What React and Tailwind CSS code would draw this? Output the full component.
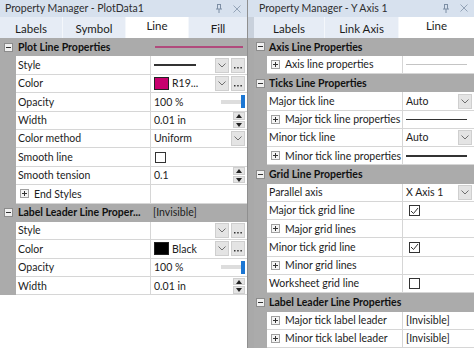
import React from 'react';

// 属性管理器面板：左侧 PlotData1，右侧 Y Axis 1
const Chevron = () => (
  <svg width="8" height="5" viewBox="0 0 8 5">
    <path d="M0.5 0.5L4 4L7.5 0.5" stroke="#6f6f6f" fill="none" strokeWidth="1" />
  </svg>
);

const DropBtn = () => (
  <div className="w-[14px] h-[15px] bg-[#e4e4e4] border border-[#cfcfcf] flex items-center justify-center">
    <Chevron />
  </div>
);

const DotsBtn = () => (
  <div className="w-[14px] h-[15px] bg-[#e4e4e4] border border-[#cfcfcf] flex items-end justify-center pb-[3px]">
    <svg width="8" height="2" viewBox="0 0 8 2">
      <rect x="0" y="0" width="1.5" height="1.5" fill="#333" />
      <rect x="3.2" y="0" width="1.5" height="1.5" fill="#333" />
      <rect x="6.4" y="0" width="1.5" height="1.5" fill="#333" />
    </svg>
  </div>
);

const Spin = () => (
  <div className="w-[12px] h-[16px] flex flex-col gap-[1px]">
    <div className="flex-1 bg-[#e4e4e4] border border-[#cfcfcf] flex items-center justify-center">
      <svg width="6" height="4" viewBox="0 0 6 4"><path d="M0 4L3 0L6 4Z" fill="#222" /></svg>
    </div>
    <div className="flex-1 bg-[#e4e4e4] border border-[#cfcfcf] flex items-center justify-center">
      <svg width="6" height="4" viewBox="0 0 6 4"><path d="M0 0L3 4L6 0Z" fill="#222" /></svg>
    </div>
  </div>
);

const Slider = () => (
  <div className="flex items-center">
    <div className="w-[20px] h-[4px] bg-[#dddddd]" />
    <div className="w-[4px] h-[13px] bg-[#1b76d3]" />
  </div>
);

const Check = ({ checked }) => (
  <div className="w-[11px] h-[11px] border border-[#333] bg-white flex items-center justify-center">
    {checked && (
      <svg width="9" height="8" viewBox="0 0 9 8">
        <path d="M1 4L3.5 6.5L8 1" stroke="#333" fill="none" strokeWidth="1" />
      </svg>
    )}
  </div>
);

const PlusBox = () => (
  <span className="w-[9px] h-[9px] border border-[#a0a0a0] bg-[#f4f4f4] flex items-center justify-center shrink-0">
    <svg width="5" height="5" viewBox="0 0 5 5">
      <path d="M0 2.5H5M2.5 0V5" stroke="#333" strokeWidth="1" />
    </svg>
  </span>
);

const MinusBox = () => (
  <span className="w-[9px] h-[9px] border border-[#8c8c8c] bg-[#f0f0f0] flex items-center justify-center">
    <svg width="5" height="1" viewBox="0 0 5 1"><path d="M0 0.5H5" stroke="#333" strokeWidth="1" /></svg>
  </span>
);

const Header = ({ title, value, gutter, nameW }) => (
  <div className="h-[18.4px] flex items-center bg-[#ababab]">
    <div className={`${gutter} h-full flex items-center justify-center`}>
      <MinusBox />
    </div>
    <div className={`${nameW} pl-[2px] font-bold text-[#111] whitespace-nowrap`}>{title}</div>
    <div className="flex-1 pl-[2px] whitespace-nowrap">{value}</div>
  </div>
);

const Row = ({ name, plus, value, right, gutter, nameW }) => (
  <div className="h-[18.4px] flex bg-[#ababab]">
    <div className={`${gutter} h-full`} />
    <div className={`${nameW} h-full bg-white border-b border-r border-[#d6d6d6] flex items-center whitespace-nowrap overflow-hidden ${plus ? 'pl-[4px] gap-[5px]' : 'pl-[2px]'}`}>
      {plus && <PlusBox />}
      <span>{name}</span>
    </div>
    <div className="flex-1 h-full bg-white border-b border-[#d6d6d6] flex items-center pl-[3px] pr-[2px]">
      <div className="flex-1 flex items-center gap-[3px] whitespace-nowrap">{value}</div>
      {right && <div className="flex items-center gap-[2px]">{right}</div>}
    </div>
  </div>
);

const TitleBar = ({ title }) => (
  <div className="h-[17px] bg-[#d7e1ee] flex items-center pl-[5px] pr-[6px] text-[10.5px] text-[#2e2e2e]">
    <span className="flex-1 whitespace-nowrap">{title}</span>
    <svg width="8" height="9" viewBox="0 0 8 9" className="mr-[10px]">
      <path d="M2 0.5H6M2.5 0.5V5M5.5 0.5V5M1 5H7M4 5V9" stroke="#7d8ea4" fill="none" strokeWidth="1" />
    </svg>
    <svg width="8" height="8" viewBox="0 0 8 8">
      <path d="M0.5 0.5L7.5 7.5M7.5 0.5L0.5 7.5" stroke="#93a3b7" strokeWidth="1" />
    </svg>
  </div>
);

const Tabs = ({ tabs, active }) => (
  <div className="h-[21px] flex gap-[1px] bg-[#f4f7fb]">
    {tabs.map((t, i) => (
      <div
        key={t.label}
        className={`${t.w} h-full flex items-center justify-center text-[11.5px] ${i === active ? 'bg-white pb-[3px]' : 'bg-[#e6ecf5] pt-[2px]'}`}
      >
        {t.label}
      </div>
    ))}
  </div>
);

const Line = ({ w, color }) => <div className={`${w} h-[1.5px] ${color}`} />;

const LeftPanel = () => {
  const g = 'w-[16px]';
  const n = 'w-[135px]';
  const p = { gutter: g, nameW: n };
  return (
    <div className="w-[247px] h-full flex flex-col bg-white">
      <TitleBar title="Property Manager - PlotData1" />
      <Tabs
        active={2}
        tabs={[
          { label: 'Labels', w: 'w-[62px]' },
          { label: 'Symbol', w: 'w-[62px]' },
          { label: 'Line', w: 'w-[62px]' },
          { label: 'Fill', w: 'flex-1' },
        ]}
      />
      <Header {...p} title="Plot Line Properties" value={<div className="pl-[2px] pr-[4px]"><Line w="w-full" color="bg-[#b04a7c]" /></div>} />
      <Row {...p} name="Style" value={<Line w="w-[42px]" color="bg-[#333]" />} right={<><DropBtn /><DotsBtn /></>} />
      <Row {...p} name="Color" value={<><div className="w-[15px] h-[13px] bg-[#c8006e] border border-[#222]" /><span>R19...</span></>} right={<><DropBtn /><DotsBtn /></>} />
      <Row {...p} name="Opacity" value="100 %" right={<Slider />} />
      <Row {...p} name="Width" value="0.01 in" right={<Spin />} />
      <Row {...p} name="Color method" value="Uniform" right={<DropBtn />} />
      <Row {...p} name="Smooth line" value={<div className="pl-[1px]"><Check /></div>} />
      <Row {...p} name="Smooth tension" value="0.1" right={<Spin />} />
      <Row {...p} name="End Styles" plus />
      <Header {...p} title="Label Leader Line Proper..." value="[Invisible]" />
      <Row {...p} name="Style" right={<><DropBtn /><DotsBtn /></>} />
      <Row {...p} name="Color" value={<><div className="w-[15px] h-[13px] bg-black border border-[#222]" /><span>Black</span></>} right={<><DropBtn /><DotsBtn /></>} />
      <Row {...p} name="Opacity" value="100 %" right={<Slider />} />
      <Row {...p} name="Width" value="0.01 in" right={<Spin />} />
      <div className="flex-1 bg-white" />
    </div>
  );
};

const RightPanel = () => {
  const g = 'w-[13px]';
  const n = 'w-[136px]';
  const p = { gutter: g, nameW: n };
  return (
    <div className="flex-1 h-full flex flex-col bg-white overflow-hidden">
      <TitleBar title="Property Manager - Y Axis 1" />
      <Tabs
        active={2}
        tabs={[
          { label: 'Labels', w: 'w-[70px]' },
          { label: 'Link Axis', w: 'w-[73px]' },
          { label: 'Line', w: 'flex-1' },
        ]}
      />
      <Header {...p} title="Axis Line Properties" />
      <Row {...p} name="Axis line properties" plus value={<Line w="w-[61px]" color="bg-[#c4c4c4]" />} />
      <Header {...p} title="Ticks Line Properties" />
      <Row {...p} name="Major tick line" value="Auto" right={<DropBtn />} />
      <Row {...p} name="Major tick line properties" plus value={<Line w="w-[61px]" color="bg-[#333]" />} />
      <Row {...p} name="Minor tick line" value="Auto" right={<DropBtn />} />
      <Row {...p} name="Minor tick line properties" plus value={<Line w="w-[61px]" color="bg-[#333]" />} />
      <Header {...p} title="Grid Line Properties" />
      <Row {...p} name="Parallel axis" value="X Axis 1" right={<DropBtn />} />
      <Row {...p} name="Major tick grid line" value={<div className="pl-[3px]"><Check checked /></div>} />
      <Row {...p} name="Major grid lines" plus />
      <Row {...p} name="Minor tick grid line" value={<div className="pl-[3px]"><Check checked /></div>} />
      <Row {...p} name="Minor grid lines" plus />
      <Row {...p} name="Worksheet grid line" value={<div className="pl-[3px]"><Check /></div>} />
      <div className="h-[18.4px] flex items-center bg-[#ababab] shrink-0">
        <div className={`${g} h-full flex items-center justify-center`}>
          <MinusBox />
        </div>
        <div className="pl-[2px] font-bold text-[#111] whitespace-nowrap">Label Leader Line Properties</div>
      </div>
      <Row {...p} name="Major tick label leader" plus value="[Invisible]" />
      <Row {...p} name="Minor tick label leader" plus value="[Invisible]" />
    </div>
  );
};

export default function App() {
  return (
    <div className="w-[474px] h-[348px] flex overflow-hidden bg-white font-['Lato',sans-serif] text-[10.5px] text-[#1c1c1c] leading-none">
      <LeftPanel />
      <div className="w-[7px] h-full flex flex-col border-l border-[#8f8f8f]">
        <div className="h-[17px] bg-[#d7e1ee]" />
        <div className="h-[21px] bg-[#c9d1dc]" />
        <div className="flex-1 bg-[#a9a9a9]" />
      </div>
      <RightPanel />
    </div>
  );
}
